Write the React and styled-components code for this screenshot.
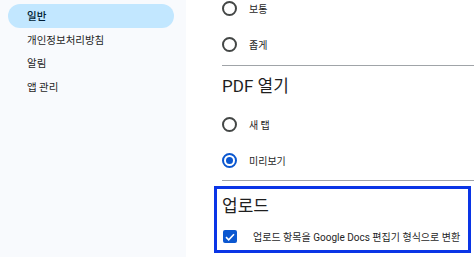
import React from "react";
import styled, { createGlobalStyle } from "styled-components";

const Global = createGlobalStyle`
  html, body { margin: 0; padding: 0; background: #ffffff; }
  body { font-family: Roboto, "Noto Sans CJK KR", "Noto Sans", sans-serif; color: #1f1f1f; overflow: hidden; }
`;

const Page = styled.div`
  display: flex;
  width: 474px;
  height: 260px;
  overflow: hidden;
`;

const Sidebar = styled.nav`
  width: 186px;
  height: 257px;
  flex: none;
  background: #f8fafd;
  box-sizing: border-box;
  padding: 4px 12px 0 8px;
  display: flex;
  flex-direction: column;
`;

const NavItem = styled.div`
  height: 23.5px;
  display: flex;
  align-items: center;
  padding-left: 19px;
  border-radius: 12px;
  font-size: 10.5px;
  font-family: "Noto Sans CJK KR", sans-serif;
  color: ${(p) => (p.$active ? "#001d35" : "#1f1f1f")};
  background: ${(p) => (p.$active ? "#c2e7ff" : "transparent")};
  font-weight: ${(p) => (p.$active ? 500 : 400)};
`;

const Main = styled.main`
  flex: 1;
  padding-left: 28px;
  display: flex;
  flex-direction: column;
  margin-top: -10px;
`;

const Section = styled.div`
  padding-left: 8px;
`;

const RadioRow = styled.div`
  height: 36px;
  display: flex;
  align-items: center;
  gap: 12px;
  font-size: 10px;
  font-family: "Noto Sans CJK KR", sans-serif;
  color: #1f1f1f;
`;

const RadioCircle = styled.span`
  width: 15px;
  height: 15px;
  box-sizing: border-box;
  border-radius: 50%;
  border: 2px solid ${(p) => (p.$checked ? "#0b57d0" : "#444746")};
  display: flex;
  align-items: center;
  justify-content: center;
  flex: none;
  &::after {
    content: "";
    width: 7px;
    height: 7px;
    border-radius: 50%;
    background: #0b57d0;
    display: ${(p) => (p.$checked ? "block" : "none")};
  }
`;

const Divider = styled.hr`
  border: none;
  border-top: 1px solid #a0a4a8;
  margin: ${(p) => p.$margin || "0"};
  margin-left: 8px;
  height: 0;
`;

const Heading = styled.h2`
  margin: 0;
  font-size: 17px;
  font-weight: 400;
  font-family: Roboto, "Noto Sans CJK KR", sans-serif;
  color: #1f1f1f;
  height: 40px;
  padding-bottom: 3px;
  box-sizing: border-box;
  display: flex;
  align-items: center;
`;

const HighlightBox = styled.div`
  margin-top: 5px;
  width: 257px;
  height: 67px;
  box-sizing: border-box;
  border: 3px solid #0a35e6;
  padding: 2px 0 0 5px;
  display: flex;
  flex-direction: column;
`;

const BoxHeading = styled(Heading)`
  height: 26px;
  padding-bottom: 0;
`;

const CheckRow = styled.div`
  display: flex;
  align-items: center;
  gap: 16px;
  margin-top: 12px;
  padding-left: 1px;
  font-size: 10px;
  font-family: Roboto, "Noto Sans CJK KR", sans-serif;
  color: #1f1f1f;
`;

const CheckBox = styled.span`
  width: 14px;
  height: 13px;
  border-radius: 2px;
  background: #0b57d0;
  display: flex;
  align-items: center;
  justify-content: center;
  flex: none;
`;

const Radio = ({ label, checked }) => (
  <RadioRow>
    <RadioCircle $checked={checked} />
    {label}
  </RadioRow>
);

export default function App() {
  return (
    <Page>
      <Global />
      <Sidebar>
        <NavItem $active>일반</NavItem>
        <NavItem>개인정보처리방침</NavItem>
        <NavItem>알림</NavItem>
        <NavItem>앱 관리</NavItem>
      </Sidebar>
      <Main>
        <Section>
          <Radio label="보통" />
          <Radio label="좁게" />
        </Section>
        <Divider $margin="3px 0 0 0" />
        <Section>
          <Heading>PDF 열기</Heading>
          <Radio label="새 탭" />
          <Radio label="미리보기" checked />
        </Section>
        <Divider $margin="2px 0 0 0" />
        <HighlightBox>
          <BoxHeading>업로드</BoxHeading>
          <CheckRow>
            <CheckBox>
              <svg width="10" height="8" viewBox="0 0 10 8">
                <path d="M1 4.2 L3.7 6.8 L9 1.3" fill="none" stroke="#fff" strokeWidth="1.6" />
              </svg>
            </CheckBox>
            업로드 항목을 Google Docs 편집기 형식으로 변환
          </CheckRow>
        </HighlightBox>
      </Main>
    </Page>
  );
}
